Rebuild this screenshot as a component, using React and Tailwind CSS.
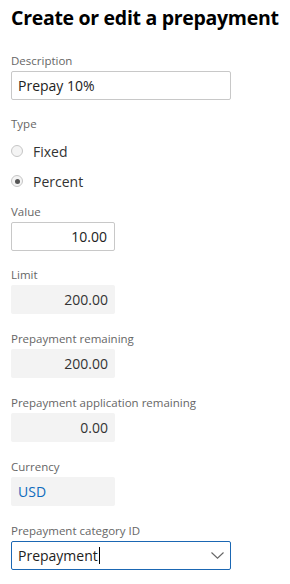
import React from 'react';

const font = { fontFamily: '"Open Sans", "Noto Sans", sans-serif' };

function Label({ children }) {
  return <div className="h-4 leading-4 text-[11.5px] text-[#666666] mb-[2px] whitespace-nowrap">{children}</div>;
}

function ReadOnly({ label, value, blue }) {
  return (
    <div className="mb-[17px]">
      <Label>{label}</Label>
      <div
        className={`w-[104px] h-[29px] bg-[#f3f3f3] rounded-[2px] flex items-center text-[14px] px-[7px] ${
          blue ? 'text-[#0f6cbd] justify-start' : 'text-[#333333] justify-end'
        }`}
      >
        {value}
      </div>
    </div>
  );
}

function Radio({ label, checked }) {
  return (
    <div className="h-5 flex items-center">
      <span className="w-[12px] h-[12px] rounded-full border border-[#c6c6c6] bg-[#f4f4f4] flex items-center justify-center">
        {checked && <span className="w-[5px] h-[5px] rounded-full bg-[#555555]" />}
      </span>
      <span className="ml-[10px] text-[14px] text-[#333333]">{label}</span>
    </div>
  );
}

export default function App() {
  return (
    <div className="bg-white w-[290px] h-[584px] pl-[11px] pt-[4px]" style={font}>
      <h1 className="h-7 leading-7 text-[19.5px] font-bold text-black tracking-[-0.3px] whitespace-nowrap mb-[21px]">
        Create or edit a prepayment
      </h1>

      <div className="mb-[16px]">
        <Label>Description</Label>
        <div className="w-[220px] h-[29px] border border-[#c8c8c8] rounded-[2px] flex items-center px-[6px] text-[14px] text-[#222222]">
          Prepay 10%
        </div>
      </div>

      <Label>Type</Label>
      <div className="mt-[9px] flex flex-col gap-[10px]">
        <Radio label="Fixed" />
        <Radio label="Percent" checked />
      </div>

      <div className="mt-[13px] mb-[16px]">
        <Label>Value</Label>
        <div className="w-[104px] h-[29px] border border-[#c8c8c8] rounded-[2px] flex items-center justify-end px-[7px] text-[14px] text-[#222222]">
          10.00
        </div>
      </div>

      <ReadOnly label="Limit" value="200.00" />
      <ReadOnly label="Prepayment remaining" value="200.00" />
      <ReadOnly label="Prepayment application remaining" value="0.00" />
      <ReadOnly label="Currency" value="USD" blue />

      <div>
        <Label>Prepayment category ID</Label>
        <div className="w-[220px] h-[29px] border border-[#1b67b3] rounded-[2px] flex items-center justify-between pl-[6px] pr-[6px] text-[14px] text-[#222222]">
          <span className="flex items-center">
            Prepayment
            <span className="inline-block w-px h-[17px] bg-black ml-[1px]" />
          </span>
          <svg width="13" height="7" viewBox="0 0 13 7" fill="none">
            <path d="M0.5 0.5 L6.5 6.2 L12.5 0.5" stroke="#666666" strokeWidth="1.1" />
          </svg>
        </div>
      </div>
    </div>
  );
}
